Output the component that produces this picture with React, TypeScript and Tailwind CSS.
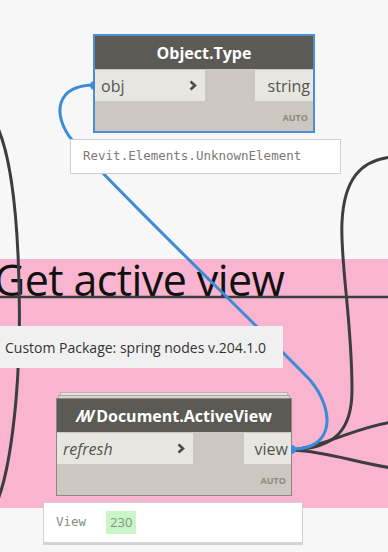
import React from "react";

const SANS = { fontFamily: '"Open Sans", "Noto Sans", sans-serif' };
const MONO = { fontFamily: '"DejaVu Sans Mono", "Liberation Mono", monospace' };

function Chevron() {
  return (
    <svg width="8" height="11" viewBox="0 0 8 11">
      <polyline points="1.5,1.5 6,5.5 1.5,9.5" fill="none" stroke="#4d4c48" strokeWidth="2.6" />
    </svg>
  );
}

type NodeProps = {
  title: React.ReactNode;
  input: string;
  inputItalic?: boolean;
  inputWidth: string;
  output: string;
  outputWidth: string;
  className: string;
};

function Node({ title, input, inputItalic, inputWidth, output, outputWidth, className }: NodeProps) {
  return (
    <div className={`absolute flex flex-col bg-[#ccc8c1] ${className}`} style={SANS}>
      <div className="h-[33px] bg-[#5b5a55] flex items-center justify-center text-white font-bold text-[16px]">
        {title}
      </div>
      <div className="flex justify-between mt-[1px]">
        <div className={`${inputWidth} h-[31px] bg-[#e8e6e1] flex items-center justify-between pl-[6px] pr-[8px] text-[#55544f] text-[16px] ${inputItalic ? "italic" : ""}`}>
          <span>{input}</span>
          <Chevron />
        </div>
        <div className={`${outputWidth} h-[31px] bg-[#e8e6e1] flex items-center justify-end pr-[3px] text-[#55544f] text-[16px]`}>
          {output}
        </div>
      </div>
      <div className="flex-1 flex items-center justify-end pr-[5px] pt-[3px] text-[9px] font-bold text-[#8c8982]">
        AUTO
      </div>
    </div>
  );
}

export default function App() {
  return (
    <div className="relative w-[388px] h-[552px] overflow-hidden bg-[#f7f7f7]">
      {/* group */}
      <div className="absolute left-0 right-0 top-[259px] h-[249px] bg-[#f9b5d0] pl-[2px]">
        <div className="-ml-[8px] -mt-[1px] text-[43px] leading-none text-[#111] whitespace-nowrap tracking-[-0.6px]" style={SANS}>
          Get active view
        </div>
      </div>

      {/* wires */}
      <svg className="absolute inset-0" width="388" height="552" viewBox="0 0 388 552">
        <line x1="0" y1="297" x2="388" y2="297" stroke="#3d3d3d" strokeWidth="2.5" />
        <path d="M -3 126 C 22 180, 22 330, 16 400 C 12 445, 6 480, -3 502" fill="none" stroke="#3d3d3d" strokeWidth="3" />
        <path d="M 293 450 C 335 448, 352 430, 352 390 C 352 320, 340 262, 342 222 C 344 180, 360 160, 392 157" fill="none" stroke="#3d3d3d" strokeWidth="3" />
        <path d="M 293 450 C 330 445, 352 428, 392 422" fill="none" stroke="#3d3d3d" strokeWidth="3" />
        <path d="M 293 450 C 330 452, 352 462, 392 468" fill="none" stroke="#3d3d3d" strokeWidth="3" />
        <path d="M 95 85 C 55 85, 52 115, 72 140 C 125 200, 250 318, 310 380 C 335 410, 335 449, 293 449" fill="none" stroke="#3d8bd8" strokeWidth="3" />
      </svg>

      {/* Object.Type node */}
      <Node
        className="left-[93px] top-[34px] w-[222px] h-[99px] border-2 border-[#4a8fd6]"
        title="Object.Type"
        input="obj"
        inputWidth="w-[110px]"
        output="string"
        outputWidth="w-[58px]"
      />
      <div className="absolute left-[90px] top-[81px] w-[5px] h-[9px] rounded-l-full bg-[#3d8bd8]" />

      {/* preview bubble */}
      <div className="absolute left-[70px] top-[139px] w-[271px] h-[35px] bg-white border border-[#cfcfcf] flex items-center pl-[12px] text-[12.5px] text-[#7a7a7a]" style={MONO}>
        Revit.Elements.UnknownElement
      </div>

      {/* tooltip */}
      <div className="absolute left-0 top-[326px] w-[283px] h-[42px] bg-[#f0f0f0] flex items-center pl-[5px] text-[14px] text-[#333] whitespace-nowrap" style={SANS}>
        Custom Package: spring nodes v.204.1.0
      </div>

      {/* stacked node outlines */}
      <div className="absolute left-[60px] top-[392px] w-[228px] h-[20px] bg-[#e4e2de] border border-[#b9b6b0]" />
      <div className="absolute left-[58px] top-[395px] w-[232px] h-[20px] bg-[#d9d6d1] border border-[#a9a6a0]" />

      <Node
        className="left-[56px] top-[398px] w-[236px] h-[98px] border border-[#8a8782]"
        title={
          <span className="flex items-center gap-[5px]">
            <span className="italic tracking-[-3px]">/W</span>
            <span>Document.ActiveView</span>
          </span>
        }
        input="refresh"
        inputItalic
        inputWidth="w-[136px]"
        output="view"
        outputWidth="w-[47px]"
      />
      <div className="absolute left-[291px] top-[445px] w-[5px] h-[9px] rounded-r-full bg-[#3d8bd8]" />

      {/* view preview */}
      <div className="absolute left-[43px] top-[502px] w-[260px] h-[43px] bg-white border border-[#cfcfcf] border-b-[3px] border-b-[#d4d4d4] flex items-center pl-[12px] gap-[20px] text-[12.5px] text-[#8a8a8a]" style={MONO}>
        <span>View</span>
        <span className="bg-[#c9f5c9] px-[4px] py-[2px] text-[13px] text-[#7d9a7d]" style={SANS}>230</span>
      </div>
    </div>
  );
}
